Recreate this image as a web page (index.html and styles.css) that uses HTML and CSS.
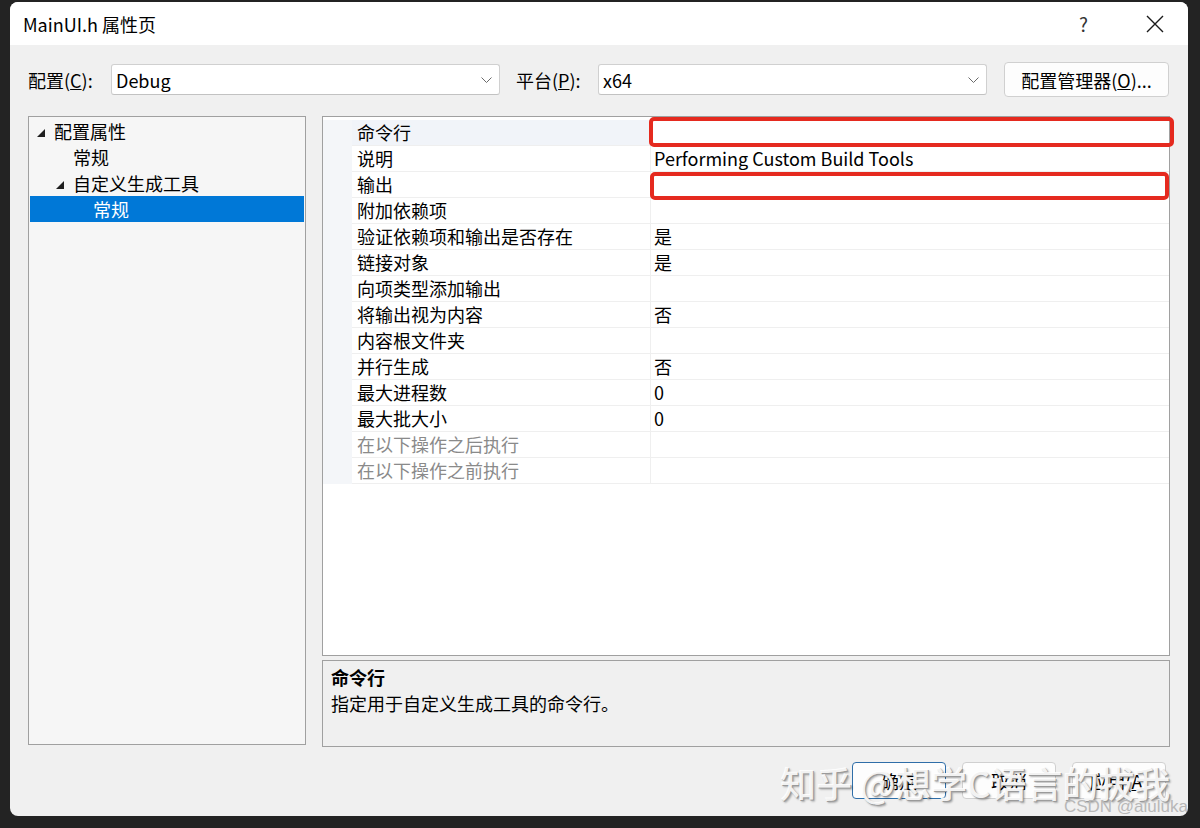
FILE: index.html
```html
<!DOCTYPE html>
<html lang="zh-CN">

<head>
    <meta charset="UTF-8">
    <meta name="viewport" content="width=device-width, initial-scale=1.0">
    <title>MainUI.h 属性页</title>
    <link rel="stylesheet" href="styles.css">
</head>

<body>
    <div class="window">
        <!-- 标题栏 -->
        <header class="titlebar">
            <span class="title">MainUI.h 属性页</span>
            <div class="title-actions">
                <span class="help">?</span>
                <svg class="close" width="18" height="18" viewBox="0 0 18 18">
                    <path d="M1 1 L17 17 M17 1 L1 17" stroke="#1a1a1a" stroke-width="1.4" fill="none" />
                </svg>
            </div>
        </header>

        <!-- 配置 / 平台 -->
        <div class="config-row">
            <span class="cfg-label">配置(<u>C</u>):</span>
            <div class="combo">
                <span class="combo-text">Debug</span>
                <svg class="chevron" width="11" height="6" viewBox="0 0 11 6">
                    <polyline points="0.5,0.5 5.5,5.5 10.5,0.5" stroke="#6a6a6a" stroke-width="1" fill="none" />
                </svg>
            </div>
            <span class="cfg-label platform-label">平台(<u>P</u>):</span>
            <div class="combo">
                <span class="combo-text">x64</span>
                <svg class="chevron" width="11" height="6" viewBox="0 0 11 6">
                    <polyline points="0.5,0.5 5.5,5.5 10.5,0.5" stroke="#6a6a6a" stroke-width="1" fill="none" />
                </svg>
            </div>
            <button type="button" class="btn btn-manager">配置管理器(<u>O</u>)...</button>
        </div>

        <div class="main">
            <!-- 左侧树 -->
            <div class="tree">
                <div class="tree-item level-0">
                    <span class="expander"><svg width="8" height="8" viewBox="0 0 8 8"><polygon points="8,0 8,8 0,8" fill="#1e1e1e" /></svg></span>
                    <span>配置属性</span>
                </div>
                <div class="tree-item level-1">
                    <span class="expander"></span>
                    <span>常规</span>
                </div>
                <div class="tree-item level-1">
                    <span class="expander"><svg width="8" height="8" viewBox="0 0 8 8"><polygon points="8,0 8,8 0,8" fill="#1e1e1e" /></svg></span>
                    <span>自定义生成工具</span>
                </div>
                <div class="tree-item level-2 selected">
                    <span class="expander"></span>
                    <span>常规</span>
                </div>
            </div>

            <div class="right-pane">
                <!-- 属性表 -->
                <div class="grid">
                    <div class="prop-row active">
                        <span class="prop-gutter"></span>
                        <span class="prop-name">命令行</span>
                        <span class="prop-value marked mark-first"></span>
                    </div>
                    <div class="prop-row">
                        <span class="prop-gutter"></span>
                        <span class="prop-name">说明</span>
                        <span class="prop-value">Performing Custom Build Tools</span>
                    </div>
                    <div class="prop-row">
                        <span class="prop-gutter"></span>
                        <span class="prop-name">输出</span>
                        <span class="prop-value marked mark-second"></span>
                    </div>
                    <div class="prop-row">
                        <span class="prop-gutter"></span>
                        <span class="prop-name">附加依赖项</span>
                        <span class="prop-value"></span>
                    </div>
                    <div class="prop-row">
                        <span class="prop-gutter"></span>
                        <span class="prop-name">验证依赖项和输出是否存在</span>
                        <span class="prop-value">是</span>
                    </div>
                    <div class="prop-row">
                        <span class="prop-gutter"></span>
                        <span class="prop-name">链接对象</span>
                        <span class="prop-value">是</span>
                    </div>
                    <div class="prop-row">
                        <span class="prop-gutter"></span>
                        <span class="prop-name">向项类型添加输出</span>
                        <span class="prop-value"></span>
                    </div>
                    <div class="prop-row">
                        <span class="prop-gutter"></span>
                        <span class="prop-name">将输出视为内容</span>
                        <span class="prop-value">否</span>
                    </div>
                    <div class="prop-row">
                        <span class="prop-gutter"></span>
                        <span class="prop-name">内容根文件夹</span>
                        <span class="prop-value"></span>
                    </div>
                    <div class="prop-row">
                        <span class="prop-gutter"></span>
                        <span class="prop-name">并行生成</span>
                        <span class="prop-value">否</span>
                    </div>
                    <div class="prop-row">
                        <span class="prop-gutter"></span>
                        <span class="prop-name">最大进程数</span>
                        <span class="prop-value">0</span>
                    </div>
                    <div class="prop-row">
                        <span class="prop-gutter"></span>
                        <span class="prop-name">最大批大小</span>
                        <span class="prop-value">0</span>
                    </div>
                    <div class="prop-row disabled">
                        <span class="prop-gutter"></span>
                        <span class="prop-name">在以下操作之后执行</span>
                        <span class="prop-value"></span>
                    </div>
                    <div class="prop-row disabled">
                        <span class="prop-gutter"></span>
                        <span class="prop-name">在以下操作之前执行</span>
                        <span class="prop-value"></span>
                    </div>
                </div>

                <!-- 说明面板 -->
                <div class="desc">
                    <div class="desc-title">命令行</div>
                    <div>指定用于自定义生成工具的命令行。</div>
                </div>
            </div>
        </div>

        <div class="footer">
            <button type="button" class="btn btn-dialog btn-primary">确定</button>
            <button type="button" class="btn btn-dialog">取消</button>
            <button type="button" class="btn btn-dialog">应用(<u>A</u>)</button>
        </div>

        <div class="watermark">知乎 @想学C语言的拔我</div>
        <div class="csdn">CSDN @aluluka</div>
    </div>
</body>

</html>
```

FILE: styles.css
```css
:root {
    --page-bg: #232323;
    --dialog-bg: #f0f0f0;
    --panel-border: #a0a0a0;
    --control-border: #d0d0d0;
    --text-color: #000;
    --muted-text: #8a8a8a;
    --select-bg: #0078d7;
    --grid-line: #efefef;
    --gutter-bg: #f4f6f9;
    --active-bg: #f1f4f9;
    --mark-color: #e52a1f;
    --font-family: "Noto Sans CJK SC", "Noto Sans", sans-serif;
}

* {
    box-sizing: border-box;
}

body {
    margin: 0;
    height: 828px;
    overflow: hidden;
    background-color: var(--page-bg);
    font-family: var(--font-family);
    font-size: 18px;
    color: var(--text-color);
}

.window {
    position: relative;
    width: 1178px;
    height: 814px;
    margin: 2px 0 0 10px;
    background-color: var(--dialog-bg);
    border-radius: 8px;
    overflow: hidden;
}

/* 标题栏 */
.titlebar {
    display: flex;
    align-items: center;
    height: 43px;
    padding: 0 24px 0 13px;
    background-color: #fff;
}

.title-actions {
    margin-left: auto;
    display: flex;
    align-items: center;
    gap: 58px;
}

.help {
    font-size: 19px;
    color: #333;
    line-height: 1;
}

/* 配置行 */
.config-row {
    display: flex;
    align-items: center;
    height: 35px;
    margin-top: 17px;
    padding-left: 18px;
}

.cfg-label {
    width: 83px;
    white-space: nowrap;
}

.platform-label {
    width: 82px;
    margin-left: 16px;
}

.combo {
    display: flex;
    align-items: center;
    width: 389px;
    height: 31px;
    padding: 0 7px 0 4px;
    background-color: #fff;
    border: 1px solid var(--control-border);
    border-bottom-color: #c2c2c2;
    border-radius: 3px;
}

.combo-text {
    flex: 1;
}

.btn {
    font-family: var(--font-family);
    font-size: 18px;
    color: var(--text-color);
    background-color: #fdfdfd;
    border: 1px solid var(--control-border);
    border-radius: 4px;
    padding: 0;
}

.btn-manager {
    width: 165px;
    height: 35px;
    margin-left: 17px;
}

/* 主体 */
.main {
    display: flex;
    gap: 16px;
    margin-top: 19px;
    padding-left: 18px;
}

.tree {
    width: 278px;
    height: 629px;
    padding: 1px;
    background-color: #f6f6f6;
    border: 1px solid var(--panel-border);
}

.tree-item {
    display: flex;
    align-items: center;
    height: 26px;
    white-space: nowrap;
}

.tree-item.level-0 {
    padding-left: 7px;
}

.tree-item.level-1 {
    padding-left: 26px;
}

.tree-item.level-2 {
    padding-left: 46px;
}

.expander {
    display: flex;
    width: 17px;
    padding-top: 3px;
}

.tree-item.selected {
    background-color: var(--select-bg);
    color: #fff;
}

.right-pane {
    display: flex;
    flex-direction: column;
    gap: 4px;
    width: 848px;
}

.grid {
    height: 540px;
    padding-top: 3px;
    background-color: #fff;
    border: 1px solid var(--panel-border);
}

.prop-row {
    display: grid;
    grid-template-columns: 29px 298px 1fr;
    height: 26px;
}

.prop-gutter {
    background-color: var(--gutter-bg);
}

.prop-name,
.prop-value {
    padding-left: 5px;
    line-height: 25px;
    white-space: nowrap;
    border-bottom: 1px solid var(--grid-line);
}

.prop-value {
    position: relative;
    padding-left: 3px;
    border-left: 1px solid var(--grid-line);
}

.prop-row.active .prop-name {
    background-color: var(--active-bg);
}

.prop-row.disabled .prop-name {
    color: var(--muted-text);
}

/* 红框标注 */
.prop-value.marked::after {
    content: "";
    position: absolute;
    border: 4px solid var(--mark-color);
    border-radius: 5px;
}

.mark-first::after {
    top: -3px;
    bottom: -2px;
    left: -2px;
    right: -5px;
}

.mark-second::after {
    top: 0;
    bottom: -3px;
    left: -1px;
    right: 0;
}

.desc {
    height: 87px;
    padding: 3px 8px;
    line-height: 26px;
    border: 1px solid var(--panel-border);
}

.desc-title {
    font-weight: 700;
}

/* 底部按钮 */
.footer {
    display: flex;
    justify-content: flex-end;
    gap: 16px;
    margin-top: 15px;
    padding-right: 22px;
}

.btn-dialog {
    width: 94px;
    height: 37px;
}

.btn-primary {
    border-color: #2f6ea8;
}

/* 水印 */
.watermark {
    position: absolute;
    left: 770px;
    top: 754px;
    font-size: 36px;
    font-weight: 500;
    white-space: nowrap;
    color: rgba(255, 255, 255, 0.9);
    text-shadow: 1px 1px 0 #9a9a9a, 2px 2px 2px rgba(0, 0, 0, 0.3);
}

.csdn {
    position: absolute;
    right: 0;
    bottom: -1px;
    font-family: "Liberation Sans", sans-serif;
    font-size: 17px;
    color: #b8b8b8;
}
```
